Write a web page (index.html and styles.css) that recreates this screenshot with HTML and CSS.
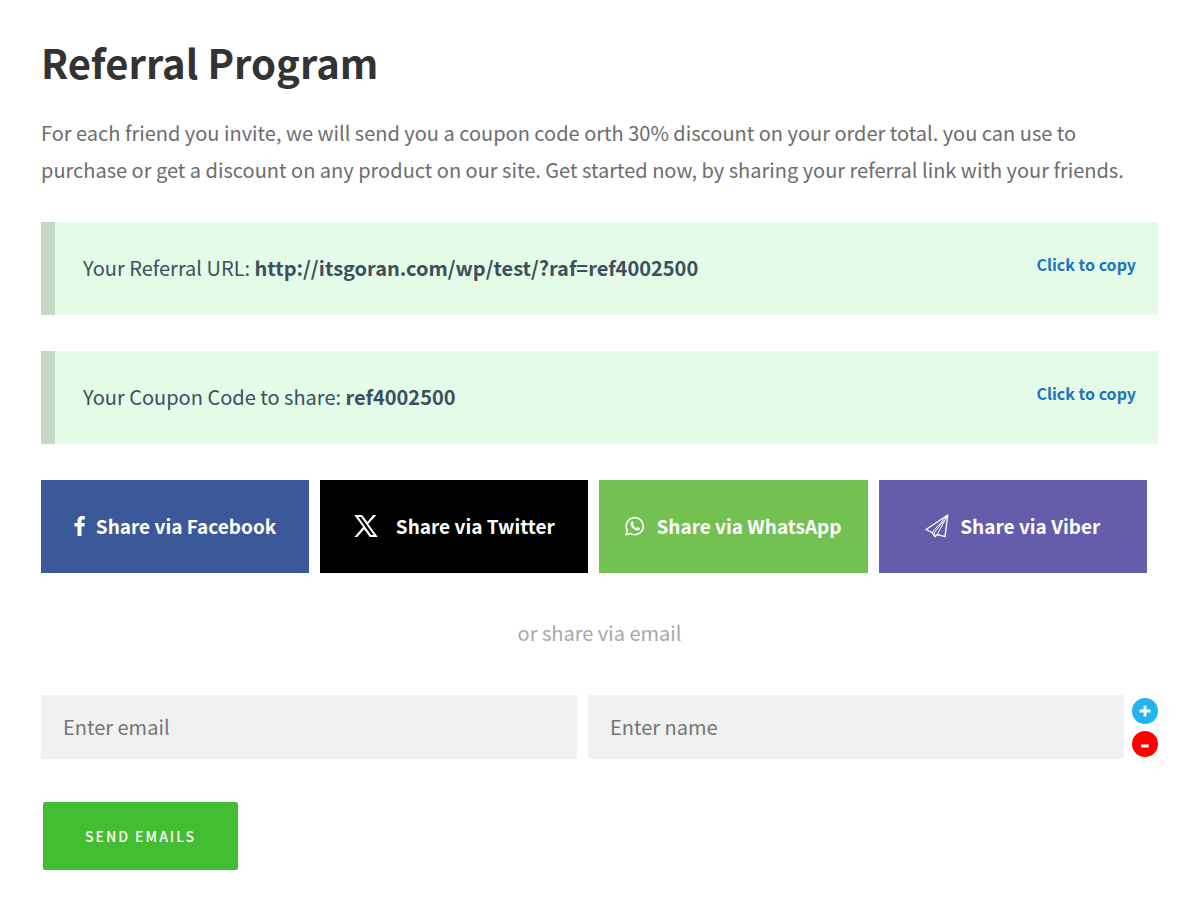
FILE: index.html
```html
<!DOCTYPE html>
<html lang="en">
<head>
<meta charset="utf-8">
<meta name="viewport" content="width=device-width, initial-scale=1">
<title>Referral Program</title>
<link rel="stylesheet" href="styles.css">
</head>
<body>
<main class="referral">
  <h1 class="title">Referral Program</h1>
  <p class="intro">For each friend you invite, we will send you a coupon code orth 30% discount on your order total. you can use to purchase or get a discount on any product on our site. Get started now, by sharing your referral link with your friends.</p>

  <section class="notice">
    <p class="notice-text">Your Referral URL: <strong>http://itsgoran.com/wp/test/?raf=ref4002500</strong></p>
    <button class="copy" type="button">Click to copy</button>
  </section>
  <section class="notice">
    <p class="notice-text">Your Coupon Code to share: <strong>ref4002500</strong></p>
    <button class="copy" type="button">Click to copy</button>
  </section>

  <nav class="shares" aria-label="Share">
    <a class="share share-facebook" href="#facebook">
      <svg class="icon-facebook" viewBox="0 0 11 20" aria-hidden="true"><path fill="currentColor" d="M10.900.2v3.300H9.100C7.800 3.500 7.500 4.100 7.500 5v2.100h3.400l-.5 3.500H7.500V20H3.500v-9.400H.4V7.100h3.100V4.700C3.500 1.700 5.400 0 8.200 0c1.300 0 2.500.1 2.700.2z"/></svg>
      <span>Share via Facebook</span>
    </a>
    <a class="share share-twitter" href="#twitter">
      <svg class="icon-x" viewBox="0 0 24 22" aria-hidden="true"><path fill="currentColor" fill-rule="evenodd" d="M.3 0h7.900l5.200 7L19.100 0h3.200l-8 9 9.500 13h-8l-5.700-7.700L3.400 22H.4l8.700-9.900zM4.400 2l12.600 18h2.700L7.100 2z"/></svg>
      <span>Share via Twitter</span>
    </a>
    <a class="share share-whatsapp" href="#whatsapp">
      <svg class="icon-whatsapp" viewBox="0 0 20 20" aria-hidden="true"><path fill="none" stroke="currentColor" stroke-width="1.600" stroke-linejoin="round" d="M1.100 18.800l1.200-4.500a8.500 8.500 0 1 1 3.300 3.300z"/><path fill="currentColor" d="M6.900 5.300c.3-.2.800-.3 1 .2l.9 2c.1.300-.5 1-.8 1.300.7 1.600 1.800 2.600 3.500 3.300.3-.1.800-1.100 1.200-1.100l2 1c.4.200.3.700.1 1.200-.4 1-1.700 1.500-2.700 1.300-3.300-.6-6-3.300-6.600-6-.2-1.300.5-2.600 1.400-3.200z"/></svg>
      <span>Share via WhatsApp</span>
    </a>
    <a class="share share-viber" href="#viber">
      <svg class="icon-plane" viewBox="0 0 24 24" aria-hidden="true"><path fill="none" stroke="currentColor" stroke-width="1.300" stroke-linejoin="round" d="M22.800 1L1 15.500l6 3 3 4.200 2.200-2.200 7.800 2.200z"/><path fill="none" stroke="currentColor" stroke-width="1" stroke-linejoin="round" d="M22.800 1L7 18.500M22.800 1L12.200 20.500M19 6.500L9.200 18.900l.8 3.800"/></svg>
      <span>Share via Viber</span>
    </a>
  </nav>

  <form class="invite">
    <p class="divider">or share via email</p>
    <div class="friend">
      <div class="fields">
        <input class="field" type="email" placeholder="Enter email" aria-label="Enter email">
        <input class="field" type="text" placeholder="Enter name" aria-label="Enter name">
      </div>
      <div class="row-actions">
        <button class="round round-add" type="button" aria-label="Add friend"><svg class="sign" viewBox="0 0 12 12" aria-hidden="true"><path fill="currentColor" d="M4.600.5h2.800v4.100h4.100v2.800H7.400v4.100H4.600V7.400H.5V4.600h4.100z"/></svg></button>
        <button class="round round-remove" type="button" aria-label="Remove friend"><svg class="sign" viewBox="0 0 12 12" aria-hidden="true"><path fill="currentColor" d="M2.200 6.500h7.600v3H2.200z"/></svg></button>
      </div>
    </div>
    <button class="send" type="submit">SEND EMAILS</button>
  </form>
</main>
</body>
</html>
```
FILE: styles.css
```css
* {
  box-sizing: border-box;
}

body {
  margin: 0;
  background: #fff;
  color: #6d6d6d;
  font: 20px/37px "Noto Sans CJK SC", "Open Sans", sans-serif;
}

h1,
p {
  margin: 0;
}

button,
input {
  border: 0;
  font: inherit;
}

button {
  cursor: pointer;
}

.referral {
  padding: 32px 42px 36px 41px;
}

.title {
  margin-bottom: 22px;
  color: #333;
  font-size: 40px;
  font-weight: 600;
  line-height: 60px;
}

.intro {
  margin-bottom: 34px;
  padding-right: 16px;
}

.notice {
  display: flex;
  justify-content: space-between;
  margin-bottom: 36px;
  padding: 27px 22px 29px 28px;
  border-left: 14px solid #c3d9c5;
  background: #e4fce7;
  color: #3d4f5c;
}

.copy {
  align-self: flex-start;
  padding: 0;
  background: none;
  color: #1e73be;
  font-size: 16px;
  font-weight: 600;
  line-height: 30px;
}

.shares {
  display: grid;
  grid-template-columns: repeat(4, 24%);
  column-gap: 1%;
  margin-bottom: 41px;
}

.share {
  display: flex;
  align-items: center;
  justify-content: center;
  gap: 11px;
  padding: 27px 0 29px;
  color: #fff;
  font-size: 19px;
  font-weight: 600;
  text-decoration: none;
  white-space: nowrap;
}

.share-facebook { background: #3b5998; }
.share-twitter { gap: 18px; background: #000; }
.share-whatsapp { background: #73c150; }
.share-viber { background: #665cac; }

.icon-facebook { width: 11px; height: 20px; }
.icon-x { width: 24px; height: 22px; }
.icon-whatsapp { width: 20px; height: 20px; }
.icon-plane { width: 24px; height: 24px; }

.divider {
  margin-bottom: 44px;
  color: #a8a8a8;
  text-align: center;
}

.friend {
  display: flex;
  gap: 8px;
  margin-bottom: 43px;
}

.fields {
  display: grid;
  flex: 1;
  grid-template-columns: 1fr 1fr;
  column-gap: 11px;
}

.field {
  min-width: 0;
  height: 64px;
  padding: 0 22px 2px;
  border-radius: 0;
  background: #f0f2f1;
  color: #43454b;
}

.field::placeholder {
  color: #757575;
  opacity: 1;
}

.row-actions {
  display: flex;
  flex-direction: column;
  justify-content: center;
  gap: 7px;
}

.round {
  display: grid;
  place-items: center;
  width: 26px;
  height: 26px;
  padding: 0;
  border-radius: 50%;
  color: #fff;
}

.round-add { background: #24b4ec; }
.round-remove { background: #f00; }

.sign {
  width: 12px;
  height: 12px;
}

.send {
  margin-left: 2px;
  padding: 0 42px;
  border-radius: 2px;
  background: #43bd31;
  color: #fff;
  font-size: 14px;
  font-weight: 500;
  line-height: 68px;
  letter-spacing: 2px;
}
```
